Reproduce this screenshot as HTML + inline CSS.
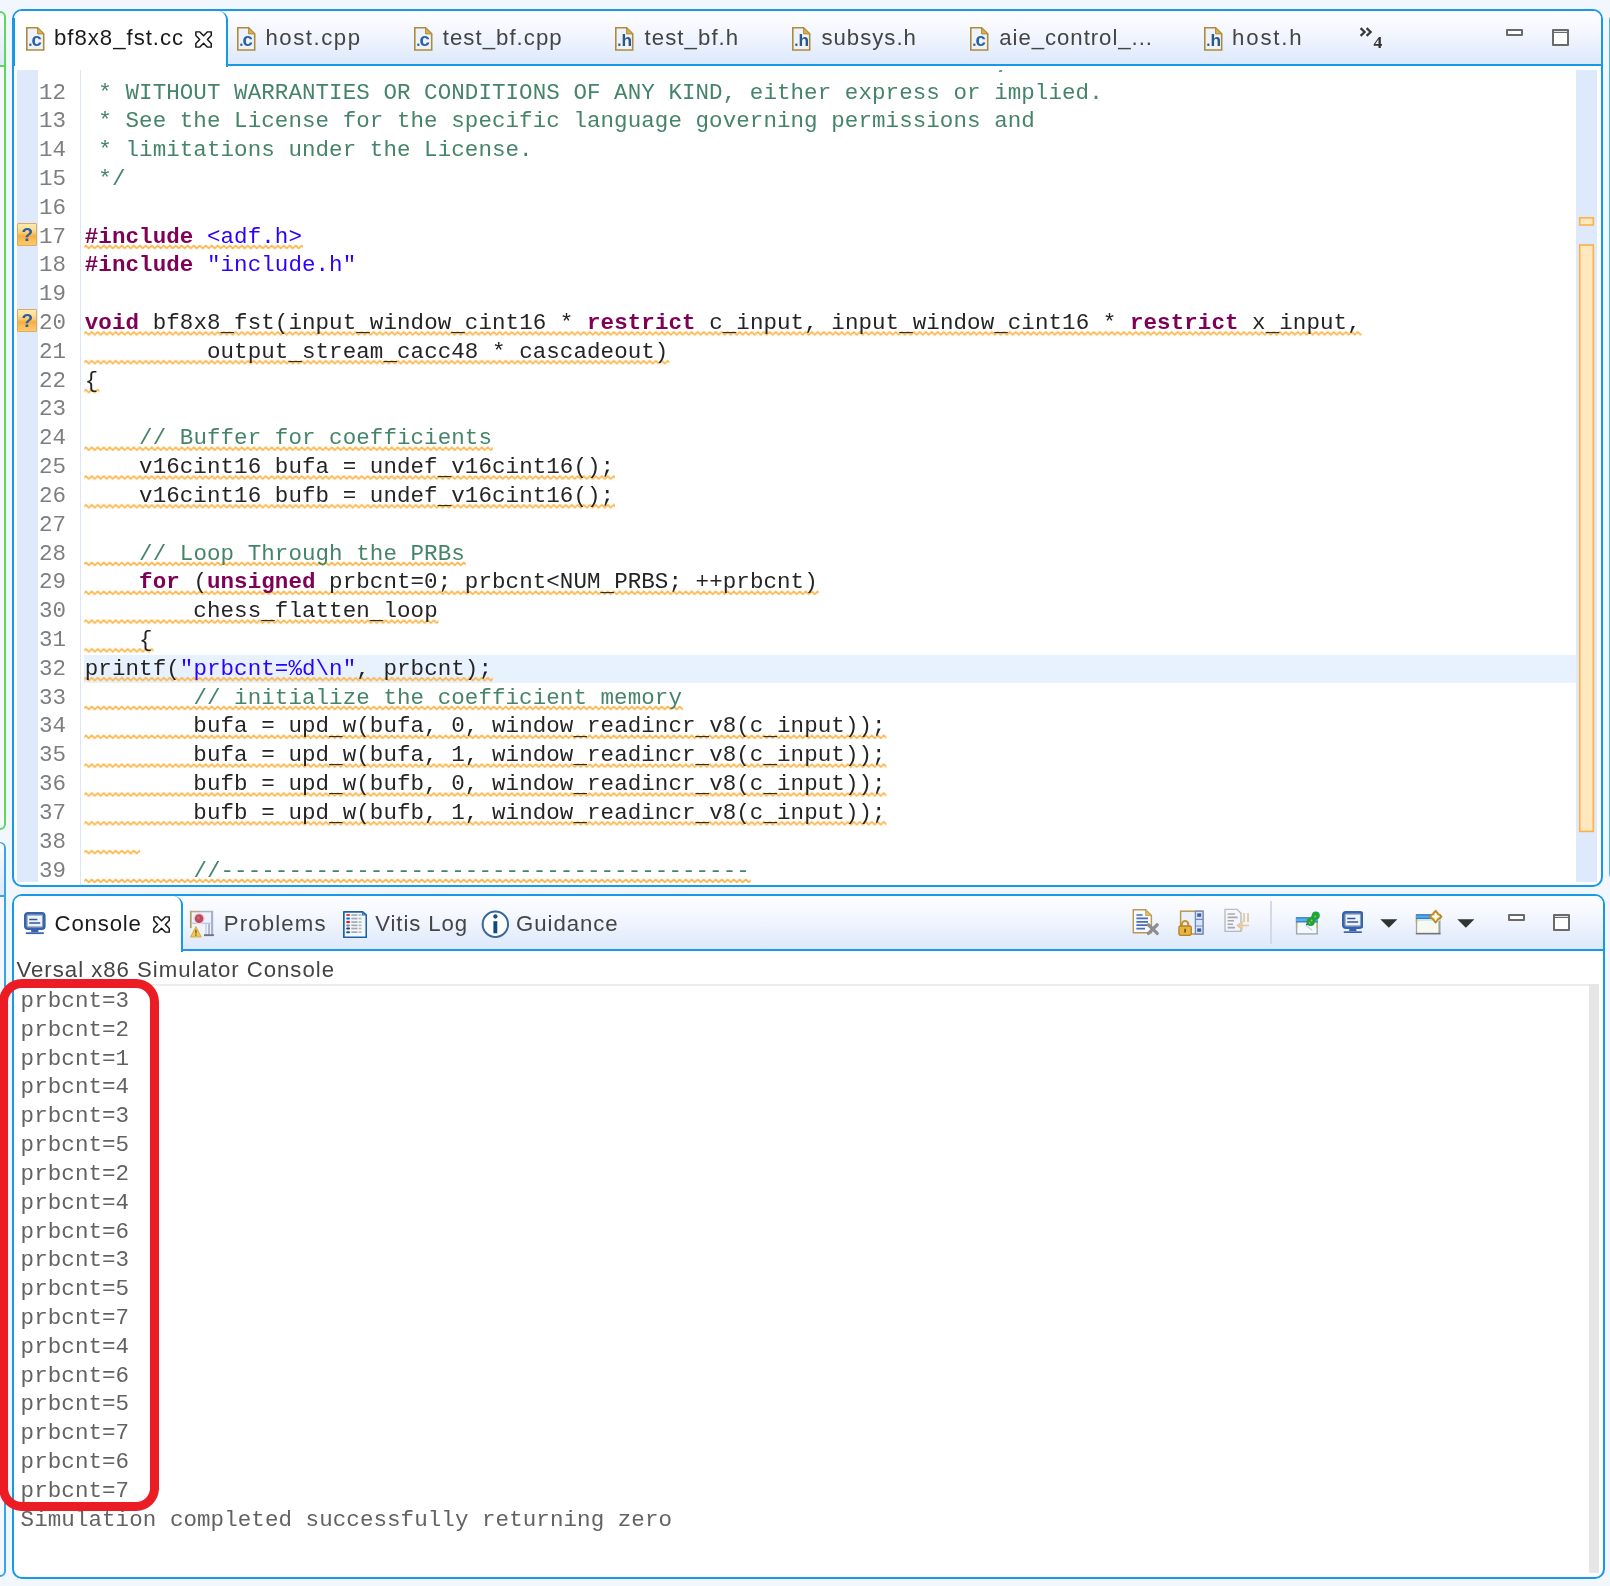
<!DOCTYPE html>
<html><head><meta charset="utf-8"><title>Vitis IDE</title>
<style>

html,body{margin:0;padding:0}
body{width:1610px;height:1586px;overflow:hidden;position:relative;background:#f2f6fd;
 font-family:"Liberation Sans",sans-serif;}
#root{position:absolute;left:0;top:0;width:1610px;height:1586px;will-change:transform}
.abs{position:absolute}
.panel{position:absolute;box-sizing:border-box;border:2px solid #1799e6;background:#fff;overflow:hidden}
.tabbar{position:absolute;left:0;right:0;top:0;background:linear-gradient(#fdfdff 0%,#f7f9fe 28%,#eef3fd 55%,#e4edfc 80%,#dde8fb 100%);
 border-bottom:2px solid #1799e6;box-sizing:border-box}
.tab{position:absolute;top:0;white-space:nowrap;font-size:22.2px;letter-spacing:.7px;color:#444}
.tab.act{color:#1a1a1a}
.mono{font-family:"Liberation Mono",monospace;font-size:22.5px;letter-spacing:.07px;white-space:pre}
.ln{position:absolute;height:28.815px;line-height:28.815px}
.num{color:#7e7e7e;left:0;width:66.1px;text-align:right}
.src{color:#242424}
.u{font-style:normal;position:relative;top:2.2px}
.k{color:#7f0055;font-weight:bold}
.s{color:#2a00ff}
.c{color:#45846a}
.con{color:#626262}

</style></head><body><div id="root">

<!-- neighbouring views -->
<div class="abs" style="left:-20px;top:11px;width:25.5px;height:819px;box-sizing:border-box;border:2px solid #5cd85c;border-radius:6px;background:#f6f8fe"></div>
<div class="abs" style="left:-20px;top:12.5px;width:24px;height:52px;background:linear-gradient(#fbfcff,#dfe8fb);border-bottom:2px solid #5cd85c;border-radius:5px 5px 0 0"></div>
<div class="abs" style="left:-20px;top:841.5px;width:25.6px;height:735px;box-sizing:border-box;border:2px solid #35a6ea;border-radius:6px;background:#f6f8fe"></div>
<div class="abs" style="left:-20px;top:843px;width:24px;height:52px;background:linear-gradient(#fbfcff,#dfe8fb);border-bottom:2px solid #35a6ea;border-radius:5px 5px 0 0"></div>
<div class="abs" style="left:1608.6px;top:14px;width:30px;height:866px;box-sizing:border-box;border:2px solid #4db2ee;border-radius:6px;background:#f6f8fe"></div>
<!-- editor -->
<div class="panel" id="editor" style="left:12px;top:9px;width:1591px;height:878px;border-radius:10px">
<div class="tabbar" style="height:55px"></div>
</div>
<div class="abs" style="left:12px;top:18px;width:3.4px;height:48px;background:#1799e6"></div>
<div class="abs" style="left:15px;top:11px;width:210.8px;height:56px;background:#fff;border-right:2px solid #1799e6;border-top-right-radius:9px;border-top-left-radius:8px"></div>
<svg class="abs" style="left:25.6px;top:27.1px" width="19" height="24" viewBox="0 0 19 24"><path d="M0.8 0.8 H11.6 L17.7 6.9 V23 H0.8 Z" fill="#eef2fb" stroke="#ad8b3a" stroke-width="1.6"/><path d="M11.6 0.8 V6.9 H17.7 Z" fill="#ddb04a" stroke="#ad8b3a" stroke-width="1"/><rect x="3.3" y="16.6" width="2.1" height="2.3" fill="#2b60a4"/><text x="5.6" y="18.9" font-family="Liberation Sans" font-weight="bold" font-size="18.6" fill="#2b60a4">c</text></svg>
<div class="tab act" style="left:54.00px;top:24.3px;line-height:27px;letter-spacing:0.980px">bf8x8_fst.cc</div>
<svg class="abs" style="left:237.2px;top:27.1px" width="19" height="24" viewBox="0 0 19 24"><path d="M0.8 0.8 H11.6 L17.7 6.9 V23 H0.8 Z" fill="#eef2fb" stroke="#ad8b3a" stroke-width="1.6"/><path d="M11.6 0.8 V6.9 H17.7 Z" fill="#ddb04a" stroke="#ad8b3a" stroke-width="1"/><rect x="3.3" y="16.6" width="2.1" height="2.3" fill="#2b60a4"/><text x="5.6" y="18.9" font-family="Liberation Sans" font-weight="bold" font-size="18.6" fill="#2b60a4">c</text></svg>
<div class="tab" style="left:265.50px;top:24.3px;line-height:27px;letter-spacing:1.520px">host.cpp</div>
<svg class="abs" style="left:413.6px;top:27.1px" width="19" height="24" viewBox="0 0 19 24"><path d="M0.8 0.8 H11.6 L17.7 6.9 V23 H0.8 Z" fill="#eef2fb" stroke="#ad8b3a" stroke-width="1.6"/><path d="M11.6 0.8 V6.9 H17.7 Z" fill="#ddb04a" stroke="#ad8b3a" stroke-width="1"/><rect x="3.3" y="16.6" width="2.1" height="2.3" fill="#2b60a4"/><text x="5.6" y="18.9" font-family="Liberation Sans" font-weight="bold" font-size="18.6" fill="#2b60a4">c</text></svg>
<div class="tab" style="left:442.80px;top:24.3px;line-height:27px;letter-spacing:1.030px">test_bf.cpp</div>
<svg class="abs" style="left:615.2px;top:27.1px" width="19" height="24" viewBox="0 0 19 24"><path d="M0.8 0.8 H11.6 L17.7 6.9 V23 H0.8 Z" fill="#eef2fb" stroke="#ad8b3a" stroke-width="1.6"/><path d="M11.6 0.8 V6.9 H17.7 Z" fill="#ddb04a" stroke="#ad8b3a" stroke-width="1"/><rect x="3.3" y="16.6" width="2.1" height="2.3" fill="#2a5688"/><text x="6.5" y="18.9" font-family="Liberation Sans" font-weight="bold" font-size="17.3" fill="#2a5688">h</text></svg>
<div class="tab" style="left:644.60px;top:24.3px;line-height:27px;letter-spacing:1.060px">test_bf.h</div>
<svg class="abs" style="left:791.6px;top:27.1px" width="19" height="24" viewBox="0 0 19 24"><path d="M0.8 0.8 H11.6 L17.7 6.9 V23 H0.8 Z" fill="#eef2fb" stroke="#ad8b3a" stroke-width="1.6"/><path d="M11.6 0.8 V6.9 H17.7 Z" fill="#ddb04a" stroke="#ad8b3a" stroke-width="1"/><rect x="3.3" y="16.6" width="2.1" height="2.3" fill="#2a5688"/><text x="6.5" y="18.9" font-family="Liberation Sans" font-weight="bold" font-size="17.3" fill="#2a5688">h</text></svg>
<div class="tab" style="left:821.40px;top:24.3px;line-height:27px;letter-spacing:1.000px">subsys.h</div>
<svg class="abs" style="left:969.9px;top:27.1px" width="19" height="24" viewBox="0 0 19 24"><path d="M0.8 0.8 H11.6 L17.7 6.9 V23 H0.8 Z" fill="#eef2fb" stroke="#ad8b3a" stroke-width="1.6"/><path d="M11.6 0.8 V6.9 H17.7 Z" fill="#ddb04a" stroke="#ad8b3a" stroke-width="1"/><rect x="3.3" y="16.6" width="2.1" height="2.3" fill="#2b60a4"/><text x="5.6" y="18.9" font-family="Liberation Sans" font-weight="bold" font-size="18.6" fill="#2b60a4">c</text></svg>
<div class="tab" style="left:999.20px;top:24.3px;line-height:27px;letter-spacing:0.960px">aie_control_...</div>
<svg class="abs" style="left:1203.9px;top:27.1px" width="19" height="24" viewBox="0 0 19 24"><path d="M0.8 0.8 H11.6 L17.7 6.9 V23 H0.8 Z" fill="#eef2fb" stroke="#ad8b3a" stroke-width="1.6"/><path d="M11.6 0.8 V6.9 H17.7 Z" fill="#ddb04a" stroke="#ad8b3a" stroke-width="1"/><rect x="3.3" y="16.6" width="2.1" height="2.3" fill="#2a5688"/><text x="6.5" y="18.9" font-family="Liberation Sans" font-weight="bold" font-size="17.3" fill="#2a5688">h</text></svg>
<div class="tab" style="left:1232.00px;top:24.3px;line-height:27px;letter-spacing:1.850px">host.h</div>
<svg class="abs" style="left:194.9px;top:30.6px" width="17.1" height="17" viewBox="0 0 17.1 17"><path d="M0.85 0.85 L4.6 0.85 L8.55 4.7 L12.5 0.85 L16.25 0.85 L16.25 4.6 L12.4 8.5 L16.25 12.4 L16.25 16.15 L12.5 16.15 L8.55 12.3 L4.6 16.15 L0.85 16.15 L0.85 12.4 L4.7 8.5 L0.85 4.6 Z" fill="#fff" stroke="#141414" stroke-width="1.45" stroke-linejoin="round"/></svg>
<svg class="abs" style="left:1358px;top:25px" width="18" height="14" viewBox="0 0 18 14"><path d="M2.6 3.2 L6.6 7 L2.6 10.8 M8.6 3.2 L12.6 7 L8.6 10.8" fill="none" stroke="#3a3a3a" stroke-width="2.3"/></svg>
<div class="abs" style="left:1373.4px;top:32.2px;font-family:'Liberation Serif',serif;font-size:17.6px;font-weight:bold;color:#333;line-height:20px">4</div>
<div class="abs" style="left:1506.0px;top:29.0px;width:17px;height:7px;box-sizing:border-box;border:2px solid #6a6a6a;background:#fff;border-radius:1px"></div><div class="abs" style="left:1551.5px;top:29.0px;width:17px;height:17px;box-sizing:border-box;border:2px solid #6a6a6a;border-top-width:4px;background:#fff;border-radius:1px"></div><div class="abs" style="left:1553.5px;top:31.0px;width:13px;height:1px;background:#e4e4e4"></div>
<!-- rulers -->
<div class="abs" style="left:17px;top:69.5px;width:20.5px;height:812px;background:#deeafc"></div>
<div class="abs" style="left:79.6px;top:69.5px;width:1.3px;height:815px;background:#dce6f8"></div>
<div class="abs" style="left:1575.6px;top:69.5px;width:21.5px;height:812px;background:#deeafc"></div>
<svg class="abs" style="left:1576px;top:210px" width="22" height="630" viewBox="0 0 22 630"><rect x="3.7" y="7.8" width="13.6" height="7.2" fill="#ffe7c0" stroke="#fbb245" stroke-width="1.6"/><rect x="3.7" y="35" width="13.6" height="586.4" fill="#ffe7c0" stroke="#fbb245" stroke-width="1.6"/></svg>
<div class="abs" style="left:84px;top:654.6px;width:1491.5px;height:28.8px;background:#e8f2fe"></div>
<!-- code -->
<div class="abs" style="left:998.8px;top:69.8px;width:2.6px;height:2.4px;background:#6a9c84;transform:skewX(-25deg)"></div>
<svg class="abs" style="left:0;top:0" width="1610" height="892" viewBox="0 0 1610 892"><defs><pattern id="wv" width="6" height="6" patternUnits="userSpaceOnUse"><path d="M-1.5 4.35 L1.5 1.45 L4.5 4.35 L7.5 1.45" fill="none" stroke="#fcb446" stroke-width="1.7" stroke-linejoin="round"/></pattern></defs><rect transform="translate(84.3 244.1)" width="218.6" height="6" fill="url(#wv)"/><rect transform="translate(84.3 330.5)" width="1277.1" height="6" fill="url(#wv)"/><rect transform="translate(84.3 359.3)" width="585.0" height="6" fill="url(#wv)"/><rect transform="translate(84.3 388.2)" width="15.1" height="6" fill="url(#wv)"/><rect transform="translate(84.3 445.8)" width="408.6" height="6" fill="url(#wv)"/><rect transform="translate(84.3 474.6)" width="530.7" height="6" fill="url(#wv)"/><rect transform="translate(84.3 503.4)" width="530.7" height="6" fill="url(#wv)"/><rect transform="translate(84.3 561.0)" width="381.5" height="6" fill="url(#wv)"/><rect transform="translate(84.3 589.9)" width="734.3" height="6" fill="url(#wv)"/><rect transform="translate(84.3 618.7)" width="354.3" height="6" fill="url(#wv)"/><rect transform="translate(84.3 647.5)" width="69.3" height="6" fill="url(#wv)"/><rect transform="translate(84.3 676.3)" width="408.6" height="6" fill="url(#wv)"/><rect transform="translate(84.3 705.1)" width="598.6" height="6" fill="url(#wv)"/><rect transform="translate(84.3 733.9)" width="802.1" height="6" fill="url(#wv)"/><rect transform="translate(84.3 762.7)" width="802.1" height="6" fill="url(#wv)"/><rect transform="translate(84.3 791.6)" width="802.1" height="6" fill="url(#wv)"/><rect transform="translate(84.3 820.4)" width="802.1" height="6" fill="url(#wv)"/><rect transform="translate(84.3 849.2)" width="55.8" height="6" fill="url(#wv)"/><rect transform="translate(84.3 878.0)" width="666.4" height="6" fill="url(#wv)"/></svg>
<div class="ln mono num" style="top:78.50px">12</div>
<div class="ln mono src" style="left:84.8px;top:78.50px"><span class="c"> * WITHOUT WARRANTIES OR CONDITIONS OF ANY KIND, either express or implied.</span></div>
<div class="ln mono num" style="top:107.31px">13</div>
<div class="ln mono src" style="left:84.8px;top:107.31px"><span class="c"> * See the License for the specific language governing permissions and</span></div>
<div class="ln mono num" style="top:136.13px">14</div>
<div class="ln mono src" style="left:84.8px;top:136.13px"><span class="c"> * limitations under the License.</span></div>
<div class="ln mono num" style="top:164.94px">15</div>
<div class="ln mono src" style="left:84.8px;top:164.94px"><span class="c"> */</span></div>
<div class="ln mono num" style="top:193.76px">16</div>
<div class="ln mono num" style="top:222.58px">17</div>
<div class="ln mono src" style="left:84.8px;top:222.58px"><b class="k">#include</b> <span class="s">&lt;adf.h&gt;</span></div>
<div class="ln mono num" style="top:251.39px">18</div>
<div class="ln mono src" style="left:84.8px;top:251.39px"><b class="k">#include</b> <span class="s">&quot;include.h&quot;</span></div>
<div class="ln mono num" style="top:280.21px">19</div>
<div class="ln mono num" style="top:309.02px">20</div>
<div class="ln mono src" style="left:84.8px;top:309.02px"><b class="k">void</b> bf8x8<i class="u">_</i>fst(input<i class="u">_</i>window<i class="u">_</i>cint16 * <b class="k">restrict</b> c<i class="u">_</i>input, input<i class="u">_</i>window<i class="u">_</i>cint16 * <b class="k">restrict</b> x<i class="u">_</i>input,</div>
<div class="ln mono num" style="top:337.84px">21</div>
<div class="ln mono src" style="left:84.8px;top:337.84px">         output<i class="u">_</i>stream<i class="u">_</i>cacc48 * cascadeout)</div>
<div class="ln mono num" style="top:366.65px">22</div>
<div class="ln mono src" style="left:84.8px;top:366.65px">{</div>
<div class="ln mono num" style="top:395.47px">23</div>
<div class="ln mono num" style="top:424.28px">24</div>
<div class="ln mono src" style="left:84.8px;top:424.28px">    <span class="c">// Buffer for coefficients</span></div>
<div class="ln mono num" style="top:453.10px">25</div>
<div class="ln mono src" style="left:84.8px;top:453.10px">    v16cint16 bufa = undef<i class="u">_</i>v16cint16();</div>
<div class="ln mono num" style="top:481.91px">26</div>
<div class="ln mono src" style="left:84.8px;top:481.91px">    v16cint16 bufb = undef<i class="u">_</i>v16cint16();</div>
<div class="ln mono num" style="top:510.73px">27</div>
<div class="ln mono num" style="top:539.54px">28</div>
<div class="ln mono src" style="left:84.8px;top:539.54px">    <span class="c">// Loop Through the PRBs</span></div>
<div class="ln mono num" style="top:568.36px">29</div>
<div class="ln mono src" style="left:84.8px;top:568.36px">    <b class="k">for</b> (<b class="k">unsigned</b> prbcnt=0; prbcnt&lt;NUM<i class="u">_</i>PRBS; ++prbcnt)</div>
<div class="ln mono num" style="top:597.17px">30</div>
<div class="ln mono src" style="left:84.8px;top:597.17px">        chess<i class="u">_</i>flatten<i class="u">_</i>loop</div>
<div class="ln mono num" style="top:625.99px">31</div>
<div class="ln mono src" style="left:84.8px;top:625.99px">    {</div>
<div class="ln mono num" style="top:654.80px">32</div>
<div class="ln mono src" style="left:84.8px;top:654.80px">printf(<span class="s">&quot;prbcnt=%d\n&quot;</span>, prbcnt);</div>
<div class="ln mono num" style="top:683.62px">33</div>
<div class="ln mono src" style="left:84.8px;top:683.62px">        <span class="c">// initialize the coefficient memory</span></div>
<div class="ln mono num" style="top:712.43px">34</div>
<div class="ln mono src" style="left:84.8px;top:712.43px">        bufa = upd<i class="u">_</i>w(bufa, 0, window<i class="u">_</i>readincr<i class="u">_</i>v8(c<i class="u">_</i>input));</div>
<div class="ln mono num" style="top:741.25px">35</div>
<div class="ln mono src" style="left:84.8px;top:741.25px">        bufa = upd<i class="u">_</i>w(bufa, 1, window<i class="u">_</i>readincr<i class="u">_</i>v8(c<i class="u">_</i>input));</div>
<div class="ln mono num" style="top:770.06px">36</div>
<div class="ln mono src" style="left:84.8px;top:770.06px">        bufb = upd<i class="u">_</i>w(bufb, 0, window<i class="u">_</i>readincr<i class="u">_</i>v8(c<i class="u">_</i>input));</div>
<div class="ln mono num" style="top:798.88px">37</div>
<div class="ln mono src" style="left:84.8px;top:798.88px">        bufb = upd<i class="u">_</i>w(bufb, 1, window<i class="u">_</i>readincr<i class="u">_</i>v8(c<i class="u">_</i>input));</div>
<div class="ln mono num" style="top:827.69px">38</div>
<div class="ln mono num" style="top:856.50px">39</div>
<div class="ln mono src" style="left:84.8px;top:856.50px">        <span class="c">//---------------------------------------</span></div>
<div class="abs" style="left:17.4px;top:222.7px;width:20px;height:23.2px;box-sizing:border-box;border:1.4px solid #dcaa66;background:linear-gradient(#ffe9a6 0%,#fde0a0 22%,#f9c76a 45%,#f4ae42 56%,#f9bc54 75%,#fdc968 100%);border-radius:1px;font-weight:bold;font-size:19px;line-height:21px;text-align:center;color:#2b5e9d;letter-spacing:0">?</div>
<div class="abs" style="left:17.4px;top:309.1px;width:20px;height:23.2px;box-sizing:border-box;border:1.4px solid #dcaa66;background:linear-gradient(#ffe9a6 0%,#fde0a0 22%,#f9c76a 45%,#f4ae42 56%,#f9bc54 75%,#fdc968 100%);border-radius:1px;font-weight:bold;font-size:19px;line-height:21px;text-align:center;color:#2b5e9d;letter-spacing:0">?</div>
<!-- console -->
<div class="panel" id="console" style="left:12px;top:893.6px;width:1592.8px;height:685px;border-radius:10px">
<div class="tabbar" style="height:55.4px"></div>
</div>
<div class="abs" style="left:14px;top:895.6px;width:167.4px;height:56px;background:#fff;border-right:2px solid #1799e6;border-top-right-radius:9px;border-top-left-radius:8px"></div>
<div class="tab act" style="left:54.60px;top:909.6px;line-height:27px;letter-spacing:0.820px">Console</div>
<div class="tab" style="left:223.80px;top:909.6px;line-height:27px;letter-spacing:1.150px">Problems</div>
<div class="tab" style="left:375.20px;top:909.6px;line-height:27px;letter-spacing:0.900px">Vitis Log</div>
<div class="tab" style="left:516.00px;top:909.6px;line-height:27px;letter-spacing:0.960px">Guidance</div>
<svg class="abs" style="left:152.7px;top:915.9px" width="17.1" height="17" viewBox="0 0 17.1 17"><path d="M0.85 0.85 L4.6 0.85 L8.55 4.7 L12.5 0.85 L16.25 0.85 L16.25 4.6 L12.4 8.5 L16.25 12.4 L16.25 16.15 L12.5 16.15 L8.55 12.3 L4.6 16.15 L0.85 16.15 L0.85 12.4 L4.7 8.5 L0.85 4.6 Z" fill="#fff" stroke="#141414" stroke-width="1.45" stroke-linejoin="round"/></svg>
<svg class="abs" style="left:24.3px;top:912.3px" width="21.6" height="22.4" viewBox="0 0 21.6 22.4"><rect x="1.4" y="1.4" width="18.8" height="15.2" rx="2.4" fill="#e9f7fd" stroke="#3663ad" stroke-width="2.8"/><rect x="3.2" y="3.2" width="15.2" height="11.6" fill="none" stroke="#8b93a8" stroke-width="0.9"/><path d="M5.2 7.6 H13.4 M5.2 10.9 H16.2" stroke="#3a4f96" stroke-width="1.5"/><path d="M7.2 18 H14.4 V20.2 H7.2 Z" fill="#3663ad"/><path d="M1.8 21.2 H19.8" stroke="#3663ad" stroke-width="1.8"/></svg>
<svg class="abs" style="left:188px;top:909px" width="28" height="30" viewBox="0 0 28 30"><rect x="3.4" y="3" width="19.8" height="23" fill="#eef2fc"/><rect x="1.9" y="1.8" width="1.8" height="17.4" fill="#a9a56a"/><rect x="1.9" y="1.8" width="11" height="1.5" fill="#b9a884"/><rect x="12.9" y="1.8" width="11.8" height="1.5" fill="#aab2c4"/><rect x="23" y="1.8" width="2.2" height="24.4" fill="#a9b3c6"/><path d="M3.6 14.3 H23" stroke="#b5c9ee" stroke-width="1.3"/><path d="M21 15 V25.4" stroke="#98a6c2" stroke-width="1.5"/><path d="M18 15 V25.4" stroke="#c2cce0" stroke-width="1.3"/><rect x="16" y="25.2" width="9.9" height="1.9" fill="#6a7290"/><circle cx="11.1" cy="9.6" r="5.7" fill="#f6d0d8"/><circle cx="11.1" cy="9.6" r="4.3" fill="#b44e5e"/><circle cx="10.4" cy="8.9" r="1.7" fill="#c4687a"/><path d="M7.9 17.8 L13.2 27.9 H2.6 Z" fill="#edcb60" stroke="#e3ad42" stroke-width="1.1" stroke-linejoin="round"/><path d="M7.9 20.8 V24.6" stroke="#8e7a18" stroke-width="1.8"/><rect x="7" y="25.4" width="1.8" height="1.4" fill="#8e7a18"/></svg>
<svg class="abs" style="left:342.8px;top:910.7px" width="24.2" height="27.3" viewBox="0 0 24.2 27.3"><path d="M0.85 0.85 H19.6 L23.3 3.9 V26.4 H0.85 Z" fill="#f3f8fc" stroke="#1c61a8" stroke-width="1.7" stroke-linejoin="round"/><path d="M19.6 0.85 V3.9 H23.3" fill="none" stroke="#2e73b6" stroke-width="1.2"/><rect x="3.2" y="3.1" width="3.8" height="2" rx=".8" fill="#f5383a"/><rect x="8.3" y="3.2" width="6.2" height="1.7" fill="#a3a9b3"/><rect x="15.6" y="3.2" width="2.9" height="1.7" fill="#b3b9c3"/><rect x="3.2" y="6.5" width="3.8" height="2" rx=".8" fill="#0b70da"/><rect x="8.3" y="6.7" width="6.2" height="1.7" fill="#a3a9b3"/><rect x="15.6" y="6.7" width="2.9" height="1.7" fill="#b3b9c3"/><rect x="3.2" y="10.1" width="3.8" height="2" rx=".8" fill="#f30c10"/><rect x="8.3" y="10.2" width="6.2" height="1.7" fill="#a3a9b3"/><rect x="15.6" y="10.2" width="2.9" height="1.7" fill="#b3b9c3"/><rect x="3.2" y="13.4" width="3.8" height="2" rx=".8" fill="#7d88ac"/><rect x="8.3" y="13.5" width="6.2" height="1.7" fill="#a3a9b3"/><rect x="15.6" y="13.5" width="2.9" height="1.7" fill="#b3b9c3"/><rect x="3.2" y="16.6" width="3.8" height="2" rx=".8" fill="#2f3c6a"/><rect x="8.3" y="16.7" width="6.2" height="1.7" fill="#a3a9b3"/><rect x="15.6" y="16.7" width="2.9" height="1.7" fill="#b3b9c3"/><rect x="3.2" y="20.2" width="3.8" height="2" rx=".8" fill="#3e5169"/><rect x="8.3" y="20.3" width="6.2" height="1.7" fill="#a3a9b3"/><rect x="15.6" y="20.3" width="2.9" height="1.7" fill="#b3b9c3"/></svg>
<svg class="abs" style="left:481px;top:910px" width="29" height="29" viewBox="0 0 29 29"><circle cx="14.35" cy="14.3" r="12.7" fill="#fff" stroke="#3567a0" stroke-width="2"/><circle cx="14.4" cy="6.5" r="2.15" fill="#174f8a"/><rect x="12.4" y="11.2" width="3.9" height="12.1" fill="#0f4a85"/></svg>
<svg class="abs" style="left:1131px;top:907px" width="30" height="30" viewBox="0 0 30 30"><path d="M2.3 2.8 H14.6 L20.4 8.6 V25.8 H2.3 Z" fill="#f7f9fe" stroke="#b79a4c" stroke-width="1.4"/><path d="M14.6 2.8 V8.6 H20.4 Z" fill="#e3bd62" stroke="#b79a4c" stroke-width=".8"/><path d="M5.4 8 H11.6 M5.4 11.4 H17 M5.4 14.8 H17 M5.4 18.2 H17 M5.4 21.6 H14" stroke="#4a6db4" stroke-width="1.7"/><path d="M17.4 17.8 L26.2 26.4 M26.2 17.8 L17.4 26.4" stroke="#8e8e8e" stroke-width="3.3" stroke-linecap="round"/></svg>
<svg class="abs" style="left:1176px;top:908px" width="30" height="30" viewBox="0 0 30 30"><rect x="4.6" y="3.2" width="22.4" height="22.8" fill="#eaf1fd" stroke="#b79a4c" stroke-width="1.5"/><rect x="19.4" y="3.2" width="7.6" height="22.8" fill="#dbe5f8" stroke="#6f88bf" stroke-width="1.3"/><rect x="21.2" y="5.4" width="4" height="3.4" fill="#3a5fa8"/><rect x="21.2" y="20.4" width="4" height="3.4" fill="#3a5fa8"/><path d="M19.6 11.4 H26.8 M19.6 18 H26.8" stroke="#6f88bf" stroke-width="1.2"/><path d="M5.9 18.5 V16.2 A3.2 3.2 0 0 1 12.3 16.2 V18.5" fill="none" stroke="#c9942f" stroke-width="2.2"/><rect x="2.9" y="18" width="12.4" height="9.4" rx="1.8" fill="#e8b441" stroke="#b8821f" stroke-width="1.3"/><path d="M9.1 20.8 V24.4" stroke="#7a5510" stroke-width="1.7"/></svg>
<svg class="abs" style="left:1222px;top:906px;opacity:.55" width="32" height="32" viewBox="0 0 32 32"><path d="M3 3.4 H15.2 L19 7.2 V25.4 H3 Z" fill="#f4f6fb" stroke="#8d8d8d" stroke-width="1.4"/><path d="M5.6 8 H13 M5.6 11.4 H15.6 M5.6 14.8 H12 M5.6 18.2 H11 M5.6 21.6 H13" stroke="#6b6b6b" stroke-width="1.6"/><path d="M22 7 V16 M26 7 V16" stroke="#e0a050" stroke-width="1.8"/><path d="M27 19.5 H17 M20 16 L15.4 19.5 L20 23 Z" fill="#f0c890" stroke="#e0a050" stroke-width="1.4"/></svg>
<div class="abs" style="left:1270px;top:901px;width:1.6px;height:43px;background:#d3d9e6"></div>
<svg class="abs" style="left:1294px;top:908px" width="28" height="28" viewBox="0 0 28 28"><rect x="2.6" y="9.9" width="20.6" height="16" fill="#f3fafd" stroke="#a3a6aa" stroke-width="1.4"/><path d="M2.6 14.5 V20" stroke="#bcae7c" stroke-width="1.4"/><path d="M23.2 14.5 V20" stroke="#bcae7c" stroke-width="1.4"/><rect x="1.9" y="9.2" width="22" height="5.3" fill="#3f7cc2"/><rect x="1.9" y="10.5" width="22" height="2.6" fill="#52b6ec"/><path d="M12.4 17.6 L18.2 22.2" stroke="#c9ced6" stroke-width="1.2"/><path d="M13.6 13.6 L11.6 17.4 L14.2 16.8 Z" fill="#2a3a78"/><circle cx="16.7" cy="13.9" r="4.1" fill="#23a03c"/><circle cx="21.8" cy="7.4" r="4" fill="#1fa63c"/><path d="M16.7 13.9 L21.8 7.4" stroke="#23a03c" stroke-width="6"/><circle cx="17.6" cy="12.6" r="1" fill="#8ccf3a"/><circle cx="21.2" cy="8.6" r="1" fill="#8ccf3a"/><circle cx="15.6" cy="15" r=".9" fill="#7cc63a"/></svg>
<svg class="abs" style="left:1341.6px;top:910.7px" width="21.6" height="22.4" viewBox="0 0 21.6 22.4"><rect x="1.4" y="1.4" width="18.8" height="15.2" rx="2.4" fill="#e9f7fd" stroke="#3663ad" stroke-width="2.8"/><rect x="3.2" y="3.2" width="15.2" height="11.6" fill="none" stroke="#8b93a8" stroke-width="0.9"/><path d="M5.2 7.6 H13.4 M5.2 10.9 H16.2" stroke="#3a4f96" stroke-width="1.5"/><path d="M7.2 18 H14.4 V20.2 H7.2 Z" fill="#3663ad"/><path d="M1.8 21.2 H19.8" stroke="#3663ad" stroke-width="1.8"/></svg>
<svg class="abs" style="left:1380.2px;top:918.8px" width="18" height="9" viewBox="0 0 18 9"><path d="M0.3 0.2 H17.4 L8.85 8.7 Z" fill="#2d3432"/></svg>
<svg class="abs" style="left:1413px;top:908px" width="30" height="28" viewBox="0 0 30 28"><rect x="3.5" y="7" width="23.4" height="18.6" fill="#f7faf0" stroke="#a2a6ac" stroke-width="1.3"/><path d="M26.2 13 V25" stroke="#9aa292" stroke-width="1.5"/><path d="M2.9 25.6 H27.5" stroke="#6e7482" stroke-width="1.5"/><rect x="2.9" y="6.2" width="24.6" height="4.8" fill="#3b7ac2"/><rect x="2.9" y="7.5" width="24.6" height="2.3" fill="#4cace6"/><rect x="2.9" y="11" width="24.6" height="2" fill="#cfe6f8"/><path d="M3.5 11 V14.2" stroke="#d0a23c" stroke-width="1.5"/><path d="M22.6 2.8 L25.2 6 L28.4 8.6 L25.2 11.2 L22.6 14.4 L20 11.2 L16.8 8.6 L20 6 Z" fill="#f6e3b0" stroke="#b98c22" stroke-width="2" stroke-linejoin="round"/><path d="M22.6 4.8 V12.4 M18.8 8.6 H26.4" stroke="#fffdf4" stroke-width="1.5"/></svg>
<svg class="abs" style="left:1456.6px;top:918.8px" width="18" height="9" viewBox="0 0 18 9"><path d="M0.3 0.2 H17.4 L8.85 8.7 Z" fill="#2d3432"/></svg>
<div class="abs" style="left:1508.0px;top:914.0px;width:17px;height:7px;box-sizing:border-box;border:2px solid #6a6a6a;background:#fff;border-radius:1px"></div><div class="abs" style="left:1553.3px;top:914.0px;width:17px;height:17px;box-sizing:border-box;border:2px solid #6a6a6a;border-top-width:4px;background:#fff;border-radius:1px"></div><div class="abs" style="left:1555.3px;top:916.0px;width:13px;height:1px;background:#e4e4e4"></div>
<div class="tab" style="left:16.50px;top:956.0px;line-height:27px;color:#444;letter-spacing:0.980px">Versal x86 Simulator Console</div>
<div class="abs" style="left:14px;top:984px;width:1585px;height:2px;background:#ebebeb"></div>
<div class="abs" style="left:1589px;top:984px;width:10px;height:589px;background:#e6e6e6"></div>
<div class="ln mono con" style="left:20.6px;top:987.00px">prbcnt=3</div>
<div class="ln mono con" style="left:20.6px;top:1015.82px">prbcnt=2</div>
<div class="ln mono con" style="left:20.6px;top:1044.63px">prbcnt=1</div>
<div class="ln mono con" style="left:20.6px;top:1073.44px">prbcnt=4</div>
<div class="ln mono con" style="left:20.6px;top:1102.26px">prbcnt=3</div>
<div class="ln mono con" style="left:20.6px;top:1131.08px">prbcnt=5</div>
<div class="ln mono con" style="left:20.6px;top:1159.89px">prbcnt=2</div>
<div class="ln mono con" style="left:20.6px;top:1188.70px">prbcnt=4</div>
<div class="ln mono con" style="left:20.6px;top:1217.52px">prbcnt=6</div>
<div class="ln mono con" style="left:20.6px;top:1246.34px">prbcnt=3</div>
<div class="ln mono con" style="left:20.6px;top:1275.15px">prbcnt=5</div>
<div class="ln mono con" style="left:20.6px;top:1303.97px">prbcnt=7</div>
<div class="ln mono con" style="left:20.6px;top:1332.78px">prbcnt=4</div>
<div class="ln mono con" style="left:20.6px;top:1361.60px">prbcnt=6</div>
<div class="ln mono con" style="left:20.6px;top:1390.41px">prbcnt=5</div>
<div class="ln mono con" style="left:20.6px;top:1419.22px">prbcnt=7</div>
<div class="ln mono con" style="left:20.6px;top:1448.04px">prbcnt=6</div>
<div class="ln mono con" style="left:20.6px;top:1476.86px">prbcnt=7</div>
<div class="ln mono con" style="left:20.6px;top:1505.67px">Simulation completed successfully returning zero</div>
<div class="abs" style="left:-1px;top:979.2px;width:160px;height:531.4px;box-sizing:border-box;border:9px solid #ec1c24;border-radius:23px"></div>

</div></body></html>
